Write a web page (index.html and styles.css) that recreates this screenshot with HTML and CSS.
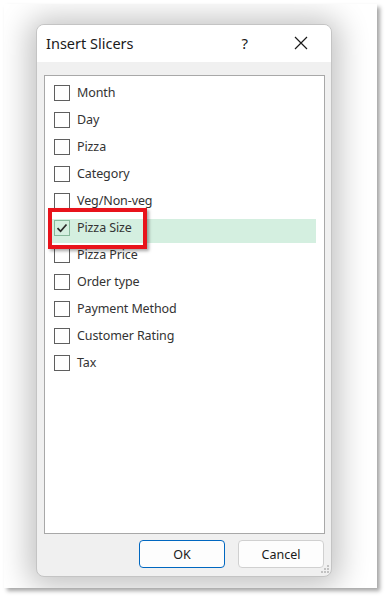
FILE: index.html
```html
<!DOCTYPE html>
<html>
<head>
<meta charset="utf-8">
<link rel="stylesheet" href="styles.css">
</head>
<body>
<div class="frame">
  <div class="dialog">
    <div class="titlebar">
      <span class="title">Insert Slicers</span>
      <span class="help">?</span>
      <svg class="close" width="14" height="14" viewBox="0 0 14 14"><path d="M1 1L13 13M13 1L1 13" stroke="#1a1a1a" stroke-width="1.2" fill="none"/></svg>
    </div>
    <div class="body">
      <div class="listbox">
        <div class="row"><span class="cb"></span><span class="label">Month</span></div>
        <div class="row"><span class="cb"></span><span class="label">Day</span></div>
        <div class="row"><span class="cb"></span><span class="label">Pizza</span></div>
        <div class="row"><span class="cb"></span><span class="label">Category</span></div>
        <div class="row"><span class="cb"></span><span class="label">Veg/Non-veg</span></div>
        <div class="row selected"><span class="cb checked"><svg width="14" height="14" viewBox="0 0 14 14"><path d="M2.5 7.2L5.6 10.3L11.5 3.5" stroke="#2b2b2b" stroke-width="1.8" fill="none"/></svg></span><span class="label">Pizza Size</span></div>
        <div class="row"><span class="cb"></span><span class="label">Pizza Price</span></div>
        <div class="row"><span class="cb"></span><span class="label">Order type</span></div>
        <div class="row"><span class="cb"></span><span class="label">Payment Method</span></div>
        <div class="row"><span class="cb"></span><span class="label">Customer Rating</span></div>
        <div class="row"><span class="cb"></span><span class="label">Tax</span></div>
        <div class="highlight-box"></div>
      </div>
      <div class="buttons">
        <button class="btn primary">OK</button>
        <button class="btn">Cancel</button>
      </div>
      <div class="grip">
        <i class="d1"></i><i class="d2"></i><i class="d3"></i><i class="d4"></i><i class="d5"></i><i class="d6"></i>
      </div>
    </div>
  </div>
</div>
</body>
</html>
```

FILE: styles.css
```css
html, body {
  margin: 0;
  padding: 0;
  background: #ffffff;
}
body {
  width: 386px;
  height: 598px;
  overflow: hidden;
  font-family: "Noto Sans", "Open Sans", sans-serif;
}
.frame {
  margin: 4px 0 0 4px;
  width: 373px;
  height: 584px;
  background: #ffffff;
  box-shadow: 3px 3px 4px rgba(0,0,0,0.35);
  padding: 20px 0 0 32px;
  box-sizing: border-box;
  overflow: hidden;
}
.dialog {
  width: 296px;
  height: 553px;
  box-sizing: border-box;
  border: 1px solid #c4c4c4;
  border-radius: 8px;
  background: #f0f0f0;
  box-shadow: 0 2px 30px 8px rgba(0,0,0,0.24);
  display: flex;
  flex-direction: column;
  overflow: hidden;
}
.titlebar {
  height: 37px;
  background: #ffffff;
  display: flex;
  align-items: center;
  padding: 0 0 0 9px;
  flex: none;
}
.title {
  font-size: 14.5px;
  color: #1a1a1a;
  flex: 1;
  margin-top: -2px;
}
.help {
  font-size: 15px;
  color: #1a1a1a;
  margin-right: 46px;
  margin-top: -2px;
}
.close {
  margin-right: 23px;
  margin-top: -1px;
}
.body {
  flex: 1;
  position: relative;
  padding: 13px 0 0 7px;
}
.listbox {
  position: relative;
  width: 281px;
  height: 459px;
  box-sizing: border-box;
  border: 1px solid #a8a8a8;
  background: #ffffff;
  padding: 8px 8px 0 3px;
  display: flex;
  flex-direction: column;
  gap: 3px;
}
.row {
  height: 24px;
  box-sizing: border-box;
  display: flex;
  align-items: flex-start;
  padding: 1px 0 0 6px;
}
.row.selected {
  background: #d4efe0;
}
.cb {
  width: 16px;
  height: 16px;
  box-sizing: border-box;
  border: 1px solid #5f5f5f;
  background: #ffffff;
  flex: none;
  display: flex;
  align-items: center;
  justify-content: center;
}
.cb.checked {
  border-color: #86b89b;
  background: #d4efe0;
}
.label {
  margin-left: 7px;
  font-size: 12.5px;
  line-height: 16px;
  color: #333333;
  letter-spacing: -0.1px;
}
.highlight-box {
  position: absolute;
  left: 3px;
  top: 132px;
  width: 99px;
  height: 41px;
  box-sizing: border-box;
  border: 4px solid #e8131b;
  box-shadow: 2px 2px 3px rgba(0,0,0,0.35);
}
.buttons {
  display: flex;
  gap: 13px;
  margin: 6px 0 0 95px;
}
.btn {
  width: 86px;
  height: 28px;
  box-sizing: border-box;
  border: 1px solid #d0d0d0;
  border-radius: 4px;
  background: #fdfdfd;
  font-family: "Noto Sans", "Open Sans", sans-serif;
  font-size: 12.5px;
  color: #1a1a1a;
  padding: 0;
}
.btn.primary {
  border-color: #0067c0;
}
.grip {
  position: absolute;
  right: 2px;
  bottom: 3px;
  width: 8px;
  height: 8px;
}
.grip i {
  position: absolute;
  width: 2px;
  height: 2px;
  background: #c2c2c2;
}
.grip .d1 { left: 6px; top: 0; }
.grip .d2 { left: 3px; top: 3px; }
.grip .d3 { left: 6px; top: 3px; }
.grip .d4 { left: 0; top: 6px; }
.grip .d5 { left: 3px; top: 6px; }
.grip .d6 { left: 6px; top: 6px; }
```
